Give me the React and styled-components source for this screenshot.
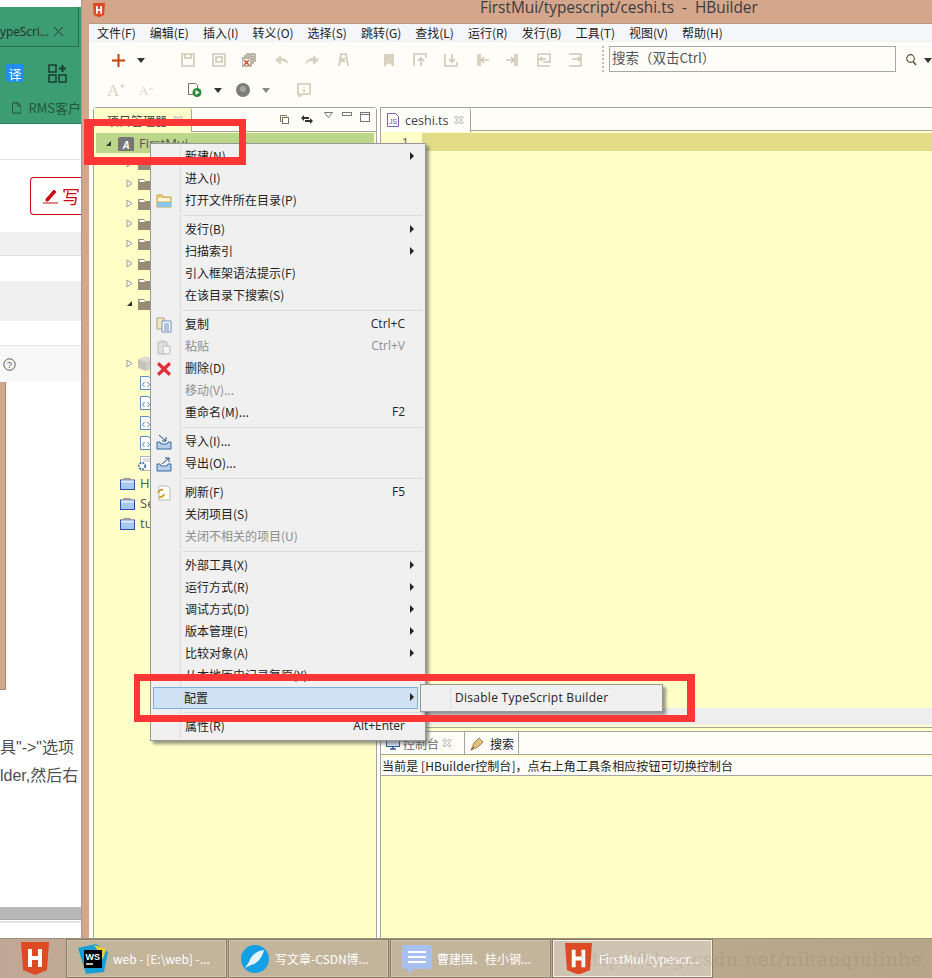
import React from "react";
import styled, { createGlobalStyle } from "styled-components";

const Global = createGlobalStyle`
  html, body { margin: 0; padding: 0; background: #fff; }
  body { font-family: "Open Sans", "Noto Sans CJK SC", sans-serif; }
  * { box-sizing: border-box; }
`;
const CN = `"Noto Sans CJK SC", "Microsoft YaHei", sans-serif`;

const Desktop = styled.div`
  position: relative; width: 932px; height: 978px; overflow: hidden;
  display: flex; flex-direction: column; font-family: "Open Sans", ${CN};
`;
const Windows = styled.div`display: flex; height: 938px;`;

/* browser behind */
const Browser = styled.div`
  width: 82px; flex: none; background: #fff; display: flex; flex-direction: column;
  border-right: 1px solid #a89a90; overflow: hidden; font-family: ${CN};
`;
const BrowserTabs = styled.div`
  height: 40px; margin-top: 7px; flex: none; background: #3c9d72; display: flex; color: #2a2a2a; font-size: 12px; white-space: nowrap; overflow: hidden;
`;
const BrowserTab = styled.div`
  height: 40px; width: 79px; flex: none; border-right: 1px solid #2a7050; border-bottom: 1px solid #2a7050;
  display: flex; align-items: center; gap: 5px; padding: 10px 0 0 0; overflow: hidden;
  font-family: "Open Sans", ${CN}; letter-spacing: -.1px;
`;
const BrowserTools = styled.div`
  height: 77px; flex: none; background: #3c9d72; border-bottom: 1px solid #2d8059; display: flex; flex-direction: column; padding-top: 14px;
`;
const ToolRow = styled.div`display: flex; align-items: center; gap: 24px; padding-left: 6px; height: 24px;`;
const Translate = styled.span`
  width: 18px; height: 18px; background: #1f8eef; color: #fff; font-size: 13px; display: flex; align-items: center; justify-content: center; border-radius: 2px;
`;
const Bookmark = styled.div`
  display: flex; align-items: center; gap: 7px; margin-top: 13px; padding-left: 12px; color: #22573f; font-size: 13px; white-space: nowrap;
`;
const WhiteBand = styled.div`height: 36px; background: #fff; border-bottom: 1px solid #e4e4e4; flex: none;`;
const WriteBand = styled.div`
  height: 72px; flex: none; background: #fff; padding: 17px 0 0 30px; overflow: hidden;
`;
const WriteBtn = styled.div`
  width: 60px; height: 38px; border: 1px solid #ca0c16; border-right: none; border-radius: 4px 0 0 4px;
  color: #ca0c16; font-size: 18px; display: flex; align-items: center; gap: 3px; padding-left: 12px; white-space: nowrap;
`;
const GreyBand = styled.div`flex: none; height: ${p => p.$h}px; background: ${p => p.$c}; border-bottom: 1px solid ${p => p.$b || "transparent"};`;
const HelpBand = styled.div`
  flex: none; height: 36px; background: #f8f8f8; display: flex; align-items: center; padding-left: 3px;
`;
const DocArea = styled.div`flex: none; height: 308px; display: flex; background: #fff;`;
const Preview = styled.div`width: 6px; height: 308px; background: #d4a78c; border-right: 1px solid #b08a72; border-bottom: 1px solid #b08a72;`;
const ArticleLine = styled.div`
  flex: none; font-family: "Liberation Sans", ${CN}; font-size: 16px; line-height: 20px; height: 28px; white-space: nowrap; direction: rtl; color: #4f4f4f; overflow: hidden;
  text-align: left;
  & > span { unicode-bidi: plaintext; }
`;
const Gap = styled.div`flex: ${p => (p.$h ? "none" : 1)}; height: ${p => p.$h || 0}px;`;

/* HBuilder */
const HB = styled.div`
  flex: 1; background: #d4a78c; display: flex; flex-direction: column; min-width: 0;
`;
const TitleBar = styled.div`height: 23px; flex: none; position: relative; display: flex; padding-left: 398px;`;
const TitleLogo = styled.div`position: absolute; left: 11px; top: 0;`;
const TitleText = styled.div`
  font-size: 15.4px; line-height: 16px; height: 18px; color: #3b3b3b; white-space: pre;
  font-family: "Open Sans", sans-serif;
`;
const Body = styled.div`
  flex: 1; margin-left: 7px; background: #fffdf8; border-top: 1px solid #b79c88; display: flex; flex-direction: column; min-height: 0;
`;
const MenuBar = styled.div`
  height: 18px; flex: none; background: #f4f6fa; display: flex; padding-left: 8px; gap: 14px; font-size: 12px; line-height: 17px; color: #222;
  font-family: ${CN}; white-space: nowrap; border-bottom: 1px solid #eef0f2;
`;
const Toolbars = styled.div`height: 65px; flex: none; background: #fffdf8; position: relative; padding-top: 3px;`;
const TbRow = styled.div`display: flex; align-items: center; height: 30px; padding-left: 22px;`;
const TbIcon = styled.span`display: inline-flex; width: ${p => p.$w || 20}px; margin-left: ${p => p.$ml || 0}px; flex: none; justify-content: center;`;
const SearchBox = styled.div`
  position: absolute; left: 520px; top: 4px; width: 287px; height: 26px; border: 1px solid #a8a8a8; background: #fffdf8;
  font-size: 13.5px; line-height: 21px; color: #555; padding-left: 2px; font-family: ${CN}; white-space: nowrap;
`;
const Dotted = styled.div`position: absolute; left: 513px; top: 4px; height: 26px; border-left: 2px dotted #bbb;`;
const SearchIcon = styled.div`position: absolute; left: 817px; top: 12px; display: flex; gap: 7px; align-items: center;`;

const Panels = styled.div`flex: 1; display: flex; padding-left: 4px; gap: 3px; min-height: 0;`;
const LeftPanel = styled.div`
  width: 284px; flex: none; border: 1px solid #a4a4a4; border-bottom: none; border-radius: 4px 4px 0 0;
  background: #ffffc8; display: flex; flex-direction: column;
`;
const PanelHead = styled.div`height: 24px; flex: none; display: flex; background: #fffdf8; border-bottom: 1px solid #a4a4a4; position: relative;`;
const ActiveTab = styled.div`
  width: ${p => p.$w}px; height: 24px; background: ${p => p.$bg || "#ffffc8"}; border-right: 1px solid #a4a4a4; margin-bottom: -1px;
  display: flex; align-items: center; gap: ${p => p.$gap || 6}px; padding-left: ${p => p.$pl || 13}px; font-size: 12px; color: #444; border-radius: 3px 3px 0 0;
  font-family: ${CN}; white-space: nowrap; z-index: 1;
`;
const HeadTools = styled.div`position: absolute; right: 6px; top: 0; display: flex; align-items: flex-start;`;
const HeadIcon = styled.span`display: flex; margin-left: ${p => p.$ml}px; margin-top: ${p => p.$mt}px;`;
const Tree = styled.div`flex: 1; padding: 1px 2px 0; display: flex; flex-direction: column; font-size: 13px; color: #555; overflow: hidden;`;
const Row = styled.div`
  height: 20px; flex: none; display: flex; align-items: center; gap: 5px; padding-left: ${p => p.$in}px;
  background: ${p => p.$sel ? "#bcd68c" : "transparent"}; white-space: nowrap;
`;
const RightCol = styled.div`flex: 1; display: flex; flex-direction: column; min-width: 0; background: #ffffc8;`;
const EditorPanel = styled.div`height: 601px; flex: none; display: flex; flex-direction: column; border-left: 1px solid #a4a4a4; background: #ffffc8;`;
const EditorHead = styled.div`height: 24px; flex: none; display: flex; background: #fffdf8; border-top: 1px solid #a4a4a4; border-bottom: 1px solid #a4a4a4;`;
const CodeRow = styled.div`
  margin-top: 2px; height: 18px; display: flex; font-size: 13px; color: #666; line-height: 18px; flex: none;
`;
const LineNo = styled.div`width: 41px; flex: none; text-align: right; padding-right: 13px; font-family: "Open Sans", sans-serif;`;
const LineHi = styled.div`flex: 1; background: #e2dc88;`;
const Sash = styled.div`height: 17px; flex: none; background: #eeeeee; border-left: 1px solid #a4a4a4; margin-bottom: 2px;`;
const ConsolePanel = styled.div`flex: 1; display: flex; flex-direction: column; background: #ffffc8; border-left: 1px solid #a4a4a4; min-height: 0; border-top: 1px solid #a4a4a4; padding-top: 3px;`;
const ConsoleTabs = styled.div`
  height: 24px; flex: none; display: flex; background: #fffdf8; font-size: 12px; font-family: ${CN}; color: #333;
  border-top: 1px solid #a4a4a4; border-bottom: 1px solid #a4a4a4;
`;
const ConsoleTab = styled.div`
  width: ${p => p.$w}px; flex: none; display: flex; align-items: center; gap: ${p => p.$gap || 5}px; padding-left: ${p => p.$pl}px; border-right: 1px solid #a4a4a4;
  background: #fffdf8; color: ${p => p.$c}; white-space: nowrap;
`;
const ConsoleMsg = styled.div`
  height: 19px; flex: none; margin-top: 2px; background: #fffdf8; border-bottom: 1px solid #a4a4a4; font-family: ${CN}; font-size: 12px; line-height: 17px; color: #222; padding-left: 1px; white-space: pre; letter-spacing: .08px;
`;

/* taskbar */
const Taskbar = styled.div`
  height: 40px; flex: none; display: flex; align-items: stretch; padding: 1px 0 1px 67px; gap: 3px;
  background: linear-gradient(90deg, #c0a795 0%, #bfae95 30%, #b6a587 100%); border-top: 1px solid #a08f78; position: relative; font-family: ${CN};
`;
const TaskStart = styled.div`position: absolute; left: 21px; top: 3px;`;
const TaskBtn = styled.div`
  width: ${p => p.$w}px; flex: none; display: flex; align-items: center; gap: ${p => p.$gap || 5}px; padding-left: ${p => p.$pl}px; color: #fff; font-size: 12px; white-space: nowrap; overflow: hidden;
  background: ${p => p.$active ? "#cfc4b2" : "#c3b49c"}; border: 1px solid ${p => p.$active ? "#f4f0ea" : "#cfc3ae"}; outline: 1px solid #8b7c66;
`;
const Watermark = styled.div`
  position: absolute; left: 579px; top: 10px; font-family: "DejaVu Serif", serif; font-size: 18.5px; letter-spacing: .75px; color: rgba(120,105,85,.18); white-space: nowrap;
`;

/* context menu */
const Menu = styled.div`
  position: absolute; left: ${p => p.$x}px; top: ${p => p.$y}px; width: ${p => p.$w}px; background: #f0f0f0; border: 1px solid #979797;
  box-shadow: 3px 3px 3px rgba(70,70,70,.55); font-family: ${CN}; font-size: 12px; color: #222; padding: 2px; z-index: 3;
`;
const Gutter = styled.div`position: absolute; top: 2px; bottom: 2px; left: 29px; width: 1px; background: #dcdcdc;`;
const Item = styled.div`
  position: relative; height: 22px; display: flex; align-items: center; padding-left: ${p => p.$pl || 32}px; padding-right: 19px; padding-bottom: 3px; white-space: nowrap;
  color: ${p => p.$off ? "#8e8e8e" : "#222"};
  ${p => p.$hi ? "background:#d0e1f4; border:1px solid #7dafe4; padding-left:30px; padding-right:13px; padding-bottom:2px; width:265px;" : ""}
  ${p => p.$latin ? `font-family: "Open Sans", sans-serif; letter-spacing: .28px; padding-bottom: 2px;` : ""}
`;
const Shortcut = styled.span`margin-left: auto; margin-right: -1px; font-family: "Open Sans", sans-serif; color: inherit;`;
const Arrow = styled.i`
  margin-left: auto; margin-right: -10px; width: 0; height: 0; border-left: 4px solid #222; border-top: 4px solid transparent; border-bottom: 4px solid transparent;
`;
const Sep = styled.div`height: 1px; background: #dcdcdc; margin: 3px 0 3px 30px;`;
const ItemIcon = styled.span`position: absolute; left: 3px; top: 3px; display: flex;`;
const RedBox = styled.div`
  position: absolute; left: ${p => p.$x}px; top: ${p => p.$y}px; width: ${p => p.$w}px; height: ${p => p.$h}px;
  border-style: solid; border-color: #fe3636; border-width: ${p => p.$t}; z-index: 5; pointer-events: none;
`;

const Logo = ({ s = 14 }) => (
  <svg width={s} height={s * 1.18} viewBox="0 0 28 33">
    <path d="M0 0H28L26 28L14 33L2 28Z" fill="#dd4b25" />
    <path d="M7 7h4v7h6V7h4v18h-4v-7h-6v7H7z" fill="#fff" />
  </svg>
);
const Tri = ({ open }) => open ? (
  <svg width="7" height="7" viewBox="0 0 7 7"><path d="M6 1V6H1Z" fill="#333" /></svg>
) : (
  <svg width="7" height="9" viewBox="0 0 7 9"><path d="M1 1L6 4.5L1 8Z" fill="#fffdf0" stroke="#999" /></svg>
);
const Folder = () => (
  <svg width="16" height="13" viewBox="0 0 16 13"><path d="M0 2h6l1 2h9v9H0z" fill="#9a8c74" /><path d="M1 3h5l1 2H2z" fill="#fff" /></svg>
);
const BlueFolder = () => (
  <svg width="15" height="13" viewBox="0 0 15 13"><path d="M4 3V1.5h6V3" fill="none" stroke="#b88" /><rect x=".5" y="3" width="14" height="9.5" fill="#a8c8f4" stroke="#2f4fa8" /><path d="M1 3.5h13v2H1z" fill="#e4f0ff" /></svg>
);
const HtmlFile = () => (
  <svg width="12" height="14" viewBox="0 0 12 14"><path d="M.5.5h8l3 3v10H.5z" fill="#fff" stroke="#5a90c0" /><path d="M4.5 6L2.5 8.5l2 2.5M7.5 6l2 2.5-2 2.5" fill="none" stroke="#4a88c0" /></svg>
);
const Gray = ({ d, w = 14 }) => (
  <svg width={w} height="14" viewBox="0 0 14 14"><path d={d} fill="none" stroke="#cfc8b4" strokeWidth="1.6" /></svg>
);
const Caret = ({ c = "#333" }) => (
  <svg width="8" height="5" viewBox="0 0 8 5"><path d="M0 0H8L4 5Z" fill={c} /></svg>
);
const Close = () => (
  <svg width="10" height="10" viewBox="0 0 10 10"><path d="M1 2.5L2.5 1 5 3.5 7.5 1 9 2.5 6.5 5 9 7.5 7.5 9 5 6.5 2.5 9 1 7.5 3.5 5Z" fill="#fff" stroke="#888" strokeWidth=".8" /></svg>
);

const menuA = [
  ["新建(N)", "arrow"], ["进入(I)"], ["打开文件所在目录(P)", null, "folder"], ["sep"],
  ["发行(B)", "arrow"], ["扫描索引", "arrow"], ["引入框架语法提示(F)"], ["在该目录下搜索(S)"], ["sep"],
  ["复制", "Ctrl+C", "copy"], ["粘贴", "Ctrl+V", "paste", true], ["删除(D)", null, "del"], ["移动(V)...", null, null, true], ["重命名(M)...", "F2"], ["sep"],
  ["导入(I)...", null, "imp"], ["导出(O)...", null, "exp"], ["sep"],
  ["刷新(F)", "F5", "ref"], ["关闭项目(S)"], ["关闭不相关的项目(U)", null, null, true], ["sep"],
  ["外部工具(X)", "arrow"], ["运行方式(R)", "arrow"], ["调试方式(D)", "arrow"], ["版本管理(E)", "arrow"], ["比较对象(A)", "arrow"], ["从本地历史记录复原(Y)"],
  ["配置", "arrow", null, false, true], ["sep"], ["属性(R)", "Alt+Enter"],
];
const icons = {
  folder: <svg width="16" height="15" viewBox="0 0 16 15"><path d="M1 2h5l1 2h8v10H1z" fill="#f0d080" stroke="#c8a040" /><path d="M2 5h12v3H2z" fill="#fff6d8" /><path d="M1 9h14v5H1z" fill="#8cc4e8" /></svg>,
  copy: <svg width="16" height="16" viewBox="0 0 16 16"><path d="M1 1h7v11H1z" fill="#f0e8c8" stroke="#b0a478" /><path d="M6 4h9v11H6z" fill="#fff" stroke="#6a8cc0" /><path d="M8 7h5M8 9h5M8 11h5M8 13h5" stroke="#5a80b8" /></svg>,
  paste: <svg width="16" height="16" viewBox="0 0 16 16"><path d="M2 3h9v12H2z" fill="#e0e0e0" stroke="#bbb" /><path d="M5 1h3v3H5z" fill="#ccc" /><path d="M7 7h7v8H7z" fill="#f4f4f4" stroke="#bbb" /></svg>,
  del: <svg width="16" height="16" viewBox="0 0 16 16"><path d="M3 1L8 5.5 13 1l2 2.5L10.5 8 15 12.5 13 15 8 10.5 3 15 1 12.5 5.5 8 1 3.5Z" fill="#e0303c" /></svg>,
  imp: <svg width="16" height="16" viewBox="0 0 16 16"><path d="M1 8h3l1 2h6l1-2h3v7H1z" fill="#b4cfe8" stroke="#3a68a0" /><path d="M3 1l7 6M10 3v4H6" fill="none" stroke="#234f88" /></svg>,
  exp: <svg width="16" height="16" viewBox="0 0 16 16"><path d="M1 8h3l1 2h6l1-2h3v7H1z" fill="#b4cfe8" stroke="#3a68a0" /><path d="M6 8l7-6M9 2h4v4" fill="none" stroke="#234f88" /></svg>,
  ref: <svg width="16" height="16" viewBox="0 0 16 16"><path d="M3 1h8l3 3v11H3z" fill="#fffff4" stroke="#bbb" /><path d="M2 8a4 4 0 0 1 5-3M8 9a4 4 0 0 1-5 3" fill="none" stroke="#d09018" strokeWidth="1.6" /></svg>,
};

export default function App() {
  return (
    <Desktop>
      <Global />
      <Windows>
        <Browser>
          <BrowserTabs>
            <BrowserTab>ypeScri... <svg width="9" height="9" viewBox="0 0 9 9"><path d="M0 0L9 9M9 0L0 9" stroke="#333" /></svg></BrowserTab>
          </BrowserTabs>
          <BrowserTools>
            <ToolRow>
              <Translate>译</Translate>
              <svg width="20" height="19" viewBox="0 0 20 19"><path d="M1 1h7v7H1zM1 11h7v7H1zM11 11h7v7h-7z" fill="none" stroke="#15402e" strokeWidth="1.5" /><path d="M14.5 1v7M11 4.5h7" stroke="#15402e" strokeWidth="2" /></svg>
            </ToolRow>
            <Bookmark>
              <svg width="12" height="14" viewBox="0 0 12 14"><path d="M.5.5h7l4 4v9H.5z M7.5.5v4h4" fill="none" stroke="#183f2e" /></svg>
              RMS客户
            </Bookmark>
          </BrowserTools>
          <WhiteBand />
          <WriteBand>
            <WriteBtn>
              <svg width="16" height="16" viewBox="0 0 16 16"><path d="M3 11L11 2l2 2-8 9H3zM0 15h15" fill="#ca0c16" stroke="#ca0c16" /></svg>
              写
            </WriteBtn>
          </WriteBand>
          <GreyBand $h={24} $c="#f0f0f0" $b="#e2e2e2" />
          <GreyBand $h={25} $c="#fff" />
          <GreyBand $h={40} $c="#f0f0f0" />
          <GreyBand $h={25} $c="#fff" $b="#e6e6e6" />
          <HelpBand>
            <svg width="13" height="13" viewBox="0 0 13 13"><circle cx="6.5" cy="6.5" r="5.7" fill="none" stroke="#555" /><text x="6.5" y="10" fontSize="9" textAnchor="middle" fill="#555" fontFamily="Liberation Sans">?</text></svg>
          </HelpBand>
          <DocArea><Preview /></DocArea>
          <Gap $h={48} />
          <ArticleLine><span>具"-&gt;"选项</span></ArticleLine>
          <ArticleLine><span>lder,然后右</span></ArticleLine>
          <Gap />
          <GreyBand $h={13} $c="#b8b8b8" $b="#a8a8a8" />
          <GreyBand $h={1} $c="#fff" />
          <GreyBand $h={2} $c="#e4e4e4" />
          <Gap $h={15} />
        </Browser>
        <HB>
          <TitleBar>
            <TitleLogo><Logo s={12} /></TitleLogo>
            <TitleText>{"FirstMui/typescript/ceshi.ts  -  HBuilder"}</TitleText>
          </TitleBar>
          <Body>
            <MenuBar>
              {["文件(F)", "编辑(E)", "插入(I)", "转义(O)", "选择(S)", "跳转(G)", "查找(L)", "运行(R)", "发行(B)", "工具(T)", "视图(V)", "帮助(H)"].map(t => <span key={t}>{t}</span>)}
            </MenuBar>
            <Toolbars>
              <TbRow>
                <TbIcon $w={14}><svg width="13" height="13" viewBox="0 0 13 13"><path d="M6.5 0v13M0 6.5h13" stroke="#c8410a" strokeWidth="2" /></svg></TbIcon>
                <TbIcon $w={8} $ml={12}><Caret /></TbIcon>
                <TbIcon $ml={33}><Gray d="M1 1h12v12H1zM4 1v4h6V1" /></TbIcon>
                <TbIcon $ml={11}><Gray d="M1 1h12v12H1zM4 4h6v5H4z" /></TbIcon>
                <TbIcon $ml={10}><svg width="14" height="14" viewBox="0 0 14 14"><path d="M4 1h9v8M2 3h9v8" fill="none" stroke="#7a7258" /><rect x="0" y="5" width="9" height="8" fill="#fff" stroke="#7a7258" /><path d="M2 7l5 5M7 7l-5 5" stroke="#d04a20" strokeWidth="1.5" /></svg></TbIcon>
                <TbIcon $ml={13}><svg width="14" height="10" viewBox="0 0 14 10"><path d="M0 5L6 0v3c4 0 7 2 8 7-2-3-4-4-8-4v4Z" fill="#d8d2c0" /></svg></TbIcon>
                <TbIcon $ml={10}><svg width="14" height="10" viewBox="0 0 14 10"><path d="M14 5L8 0v3C4 3 1 5 0 10c2-3 4-4 8-4v4Z" fill="#d8d2c0" /></svg></TbIcon>
                <TbIcon $ml={11}><Gray d="M3 13L5 1h5l2 12M5 5l4 4M9 5l-4 4" /></TbIcon>
                <TbIcon $ml={26}><svg width="10" height="13" viewBox="0 0 10 13"><path d="M0 0H10V13L5 9 0 13Z" fill="#d8d2c0" /></svg></TbIcon>
                <TbIcon $ml={11}><Gray d="M1 13V1h12v4M8 13V5M5 8l3-3 3 3" /></TbIcon>
                <TbIcon $ml={11}><Gray d="M1 1v12h12V9M8 1v8M5 6l3 3 3-3" /></TbIcon>
                <TbIcon $ml={12}><Gray d="M2 1v12M4 1v12M4 7h9M8 4L5 7l3 3" /></TbIcon>
                <TbIcon $ml={9}><Gray d="M12 1v12M10 1v12M10 7H1M6 4l3 3-3 3" /></TbIcon>
                <TbIcon $ml={12}><Gray d="M1 1h12v8H6M9 6H3l2-2M3 6l2 2M1 1v12h12" /></TbIcon>
                <TbIcon $ml={11}><Gray d="M1 1h12v12H1M4 6h8M10 4l2 2-2 2" /></TbIcon>
              </TbRow>
              <TbRow>
                <TbIcon $w={14} $ml={-1}><svg width="20" height="18" viewBox="0 0 20 18" style={{ flex: "none" }}><text x="0" y="15" fontSize="17" fontFamily="Liberation Serif" fill="#d8d2c0">A</text><path d="M13 5h5M15.5 2.5v5" stroke="#d8d2c0" /></svg></TbIcon>
                <TbIcon $w={12} $ml={17}><svg width="16" height="16" viewBox="0 0 16 16" style={{ flex: "none" }}><text x="0" y="13" fontSize="13" fontFamily="Liberation Serif" fill="#d8d2c0">A</text><path d="M10 7h4" stroke="#d8d2c0" /></svg></TbIcon>
                <TbIcon $w={14} $ml={35}><svg width="14" height="14" viewBox="0 0 14 14"><path d="M.5.5h7l2 2v3M.5.5v11h5" fill="#fff" stroke="#7a7258" /><circle cx="9" cy="9.5" r="4.5" fill="#2b8a3a" /><path d="M7.5 7l4 2.5-4 2.5Z" fill="#fff" /></svg></TbIcon>
                <TbIcon $w={8} $ml={12}><Caret /></TbIcon>
                <TbIcon $w={14} $ml={14}><svg width="14" height="14" viewBox="0 0 14 14"><circle cx="7" cy="7" r="7" fill="#7c7c78" /><circle cx="7" cy="6" r="3" fill="#a4a4a0" /></svg></TbIcon>
                <TbIcon $w={8} $ml={12}><Caret c="#8a8a84" /></TbIcon>
                <TbIcon $w={14} $ml={27}><Gray d="M1 1h12v10H5l-3 3v-3H1zM7 4v1M7 6v3" /></TbIcon>
              </TbRow>
              <Dotted />
              <SearchBox>搜索（双击Ctrl）</SearchBox>
              <SearchIcon>
                <svg width="11" height="12" viewBox="0 0 11 12"><circle cx="4.5" cy="4.5" r="3.8" fill="none" stroke="#5a5038" strokeWidth="1.2" /><path d="M7 7.5l3 3.5" stroke="#5a5038" strokeWidth="1.5" /></svg>
                <Caret />
              </SearchIcon>
            </Toolbars>
            <Panels>
              <LeftPanel>
                <PanelHead>
                  <ActiveTab $w={98}>项目管理器 <Close /></ActiveTab>
                  <HeadTools>
                    <HeadIcon $ml={0} $mt={7}><svg width="9" height="9" viewBox="0 0 9 9"><path d="M.5 .5h6v1M.5.5v6h1" fill="none" stroke="#7a7258" /><rect x="2.5" y="2.5" width="6" height="6" fill="none" stroke="#7a7258" /></svg></HeadIcon>
                    <HeadIcon $ml={12} $mt={7}><svg width="12" height="9" viewBox="0 0 12 9"><path d="M0 3L3 0v2h5v2H3v2ZM12 6L9 3v2H4v2h5v2Z" fill="#333" /></svg></HeadIcon>
                    <HeadIcon $ml={11} $mt={4}><svg width="9" height="6" viewBox="0 0 9 6"><path d="M.5.5h8L4.5 5.5Z" fill="#fff" stroke="#777" /></svg></HeadIcon>
                    <HeadIcon $ml={9} $mt={4}><svg width="10" height="4" viewBox="0 0 10 4"><rect x=".5" y=".5" width="9" height="3" fill="#fff" stroke="#777" /></svg></HeadIcon>
                    <HeadIcon $ml={8} $mt={4}><svg width="10" height="10" viewBox="0 0 10 10"><rect x=".5" y=".5" width="9" height="9" fill="#fff" stroke="#777" /><path d="M0 2.5h10" stroke="#777" /></svg></HeadIcon>
                  </HeadTools>
                </PanelHead>
                <Tree>
                  <Row $sel $in={9}>
                    <Tri open />
                    <svg width="16" height="15" viewBox="0 0 16 15" style={{ marginLeft: 1 }}><path d="M0 3q0-2 2-2h12q2 0 2 2v12H0z" fill="#767676" /><text x="4.5" y="13" fontSize="10" fontWeight="700" fill="#fff" fontFamily="Liberation Sans" fontStyle="italic">A</text></svg>
                    <span>FirstMui</span>
                  </Row>
                  {[0, 1, 2, 3, 4, 5, 6].map(i => <Row key={i} $in={30}><Tri /><Folder /></Row>)}
                  <Row $in={30}><Tri open /><Folder /></Row>
                  <Row $in={30} />
                  <Row $in={30} />
                  <Row $in={30}><Tri /><svg width="16" height="15" viewBox="0 0 16 15"><path d="M0 3l8-3 8 3-8 3z" fill="#dcdcd4" /><path d="M0 3l8 3v9l-8-3z" fill="#c4c4bc" /><path d="M16 3l-8 3v9l8-3z" fill="#d0d0c8" /></svg></Row>
                  {[0, 1, 2, 3].map(i => <Row key={i} $in={44}><HtmlFile /></Row>)}
                  <Row $in={41}><svg width="15" height="15" viewBox="0 0 15 15"><rect x="3.5" y=".5" width="11" height="14" fill="#fff" stroke="#b4b4b4" /><path d="M6 3h7M6 5h7" stroke="#c4c4c4" /><circle cx="5" cy="10" r="3.2" fill="#fff" stroke="#4a78a8" strokeWidth="1.8" strokeDasharray="2 1" /></svg></Row>
                  {["He", "Se", "tu"].map(t => <Row key={t} $in={24}><BlueFolder /><span>{t}</span></Row>)}
                </Tree>
              </LeftPanel>
              <RightCol>
                <EditorPanel>
                  <EditorHead>
                    <ActiveTab $w={90} $bg="#fffdf8" $pl={6} $gap={6}>
                      <svg width="12" height="14" viewBox="0 0 12 14"><path d="M.5.5h8l3 3v10H.5z" fill="#fff" stroke="#7a5cb0" /><text x="2" y="11" fontSize="7" fill="#6a4ca8" fontFamily="Liberation Sans">JS</text></svg>
                      <span style={{ fontFamily: '"Open Sans", sans-serif', fontSize: 12.5 }}>ceshi.ts</span>
                      <Close />
                    </ActiveTab>
                  </EditorHead>
                  <CodeRow><LineNo>1</LineNo><LineHi /></CodeRow>
                </EditorPanel>
                <Sash />
                <ConsolePanel>
                  <ConsoleTabs>
                    <ConsoleTab $w={84} $pl={5} $gap={3} $c="#666">
                      <svg width="14" height="13" viewBox="0 0 14 13"><rect x=".5" y=".5" width="13" height="9" fill="#dbe8f8" stroke="#2c5a9c" /><path d="M4 12h6M7 10v2" stroke="#2c5a9c" strokeWidth="1.5" /></svg>
                      控制台 <Close />
                    </ConsoleTab>
                    <ConsoleTab $w={54} $pl={5} $c="#222">
                      <svg width="15" height="15" viewBox="0 0 15 15"><path d="M1 14l3-7 5-5 4 4-5 5z" fill="#e0c080" stroke="#a88440" /><path d="M1 14l3-3" stroke="#555" /></svg>
                      搜索
                    </ConsoleTab>
                  </ConsoleTabs>
                  <ConsoleMsg>当前是 [HBuilder控制台]，点右上角工具条相应按钮可切换控制台</ConsoleMsg>
                </ConsolePanel>
              </RightCol>
            </Panels>
          </Body>
        </HB>
      </Windows>
      <Taskbar>
        <TaskStart><Logo s={28} /></TaskStart>
        <TaskBtn $w={159} $pl={10} $gap={5}>
          <svg width="30" height="30" viewBox="0 0 30 30"><path d="M0 4L18 0l12 8-4 20-18 2z" fill="#16a0d8" /><path d="M16 1l12 4-3 10z" fill="#f0d030" /><rect x="6" y="6" width="18" height="18" fill="#000" /><text x="7.5" y="16" fontSize="9" fontWeight="700" fill="#fff" fontFamily="Liberation Sans">WS</text><path d="M8 20h7" stroke="#fff" strokeWidth="1.5" /></svg>
          <span>web - [E:\web] -...</span>
        </TaskBtn>
        <TaskBtn $w={159} $pl={11} $gap={6}>
          <svg width="28" height="28" viewBox="0 0 28 28"><circle cx="14" cy="14" r="14" fill="#14a0e4" /><path d="M23 5c-8 1-13 6-15 12l-4 6 6-3c6-1 11-7 13-15z" fill="#e8f4fc" /></svg>
          <span>写文章-CSDN博...</span>
        </TaskBtn>
        <TaskBtn $w={159} $pl={10} $gap={5}>
          <svg width="30" height="30" viewBox="0 0 30 30"><path d="M3 1h24q3 0 3 3v18q0 3-3 3H12l-6 5v-5H3q-3 0-3-3V4q0-3 3-3z" fill="#a8c0f0" /><path d="M6 8h18M6 13h18M6 18h18" stroke="#fff" strokeWidth="2" /></svg>
          <span>曹建国、桂小钢...</span>
        </TaskBtn>
        <TaskBtn $w={159} $active $pl={11} $gap={7}>
          <Logo s={27} />
          <span>FirstMui/typescr...</span>
        </TaskBtn>
        <Watermark>http://blog.csdn.net/nihaoqiulinhe</Watermark>
      </Taskbar>

      <Menu $x={150} $y={143} $w={276}>
        <Gutter />
        {menuA.map((m, i) => {
          if (m[0] === "sep") return <Sep key={i} />;
          const [t, r, ic, off, hi] = m;
          return (
            <Item key={i} $off={off} $hi={hi}>
              {ic && <ItemIcon>{icons[ic]}</ItemIcon>}
              {t}
              {r === "arrow" ? <Arrow /> : r ? <Shortcut>{r}</Shortcut> : null}
            </Item>
          );
        })}
      </Menu>
      <Menu $x={420} $y={684} $w={243}>
        <Gutter />
        <Item $latin $pl={32}>Disable TypeScript Builder</Item>
      </Menu>
      <RedBox $x={84} $y={119} $w={162} $h={46} $t="7px 7px 8px 10px" />
      <RedBox $x={134} $y={674} $w={561} $h={48} $t="7px 8px 7px 6px" />
    </Desktop>
  );
}
